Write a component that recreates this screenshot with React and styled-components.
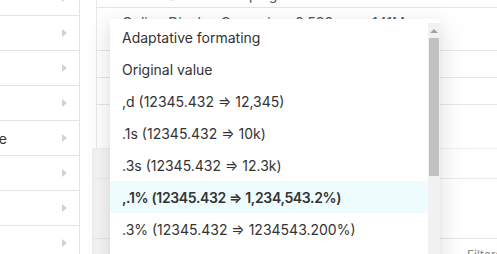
import React from 'react';
import styled, { createGlobalStyle } from 'styled-components';

const GlobalStyle = createGlobalStyle`
    html, body {
        margin: 0;
        padding: 0;
        background: #ffffff;
    }
    body {
        font-family: Inter, "Noto Sans", "DejaVu Sans", sans-serif;
        color: #333333;
    }
`;

const Page = styled.div`
    position: relative;
    width: 497px;
    height: 254px;
    overflow: hidden;
    display: flex;
    background: #ffffff;
`;

const Sidebar = styled.div`
    width: 79px;
    flex-shrink: 0;
    border-right: 1px solid #e3e3e3;
    display: flex;
    flex-direction: column;
    margin-top: -19px;
`;

const SideRow = styled.div`
    height: 34px;
    flex-shrink: 0;
    border-bottom: 1px solid #e3e3e3;
    display: flex;
    align-items: center;
    justify-content: space-between;
    padding-right: 12px;
`;

const SideLabel = styled.div`
    width: 7px;
    display: flex;
    justify-content: flex-end;
    white-space: nowrap;
    font-size: 14px;
    color: #333333;
`;

const Caret = styled.span`
    width: 0;
    height: 0;
    border-top: 4px solid transparent;
    border-bottom: 4px solid transparent;
    border-left: 5px solid #d2d2d2;
`;

const Main = styled.div`
    flex: 1;
    display: flex;
    flex-direction: column;
    margin-top: -19px;
`;

const TablePanel = styled.div`
    height: 167px;
    flex-shrink: 0;
    margin-left: 16px;
    border-left: 1px solid #e8e8e8;
    display: flex;
    flex-direction: column;
`;

const TableRow = styled.div`
    height: ${p => p.$h}px;
    flex-shrink: 0;
    border-bottom: 1px solid ${p => (p.$line ? '#e6e6e6' : 'transparent')};
    display: flex;
    align-items: ${p => (p.$top ? 'flex-start' : 'center')};
    padding-top: ${p => (p.$top ? 6 : 0)}px;
    box-sizing: border-box;
    padding-left: 25px;
    font-size: 14px;
    color: #555555;
    white-space: nowrap;
`;

const Cell = styled.span`
    width: ${p => p.$w}px;
    flex-shrink: 0;
`;

const LowerPanel = styled.div`
    flex: 1;
    margin-left: 12px;
    border-left: 1px solid #ececec;
    border-top: 1px solid #efefef;
    background: linear-gradient(to right, #f3f3f3, #fbfbfb 40px, #ffffff 80px);
    display: flex;
    flex-direction: column;
`;

const LowerHead = styled.div`
    height: 29px;
    flex-shrink: 0;
    border-bottom: 1px solid #ebebeb;
`;

const LowerBody = styled.div`
    height: 59px;
    flex-shrink: 0;
    border-bottom: 1px solid #e6e6e6;
`;

const LowerFoot = styled.div`
    padding: 8px 0 0 374px;
    font-size: 12px;
    color: #888888;
`;

const Dropdown = styled.div`
    position: absolute;
    left: 110px;
    top: 19px;
    width: 330px;
    height: 250px;
    box-sizing: border-box;
    background: #ffffff;
    border-radius: 2px;
    box-shadow: 0 3px 6px -4px rgba(0, 0, 0, 0.12), 0 6px 16px 0 rgba(0, 0, 0, 0.08), 0 9px 28px 8px rgba(0, 0, 0, 0.05);
    display: flex;
`;

const OptionList = styled.div`
    flex: 1;
    display: flex;
    flex-direction: column;
    padding-top: 2px;
`;

const Option = styled.div`
    height: 32px;
    flex-shrink: 0;
    display: flex;
    align-items: center;
    padding: 0 12px;
    font-size: 14px;
    white-space: nowrap;
    color: #333333;
    font-weight: ${p => (p.$selected ? 600 : 400)};
    letter-spacing: ${p => (p.$selected ? '-0.35px' : 'normal')};
    background: ${p => (p.$selected ? '#effcfe' : 'transparent')};
`;

const Scrollbar = styled.div`
    width: 12px;
    margin-top: 4px;
    background: #f1f1f1;
    display: flex;
    flex-direction: column;
    align-items: center;
`;

const ScrollArrow = styled.div`
    height: 15px;
    flex-shrink: 0;
    display: flex;
    align-items: center;
    justify-content: center;

    &::before {
        content: '';
        border-left: 4px solid transparent;
        border-right: 4px solid transparent;
        border-bottom: 4px solid #a3a3a3;
    }
`;

const ScrollThumb = styled.div`
    width: 10px;
    height: 138px;
    background: #c1c1c1;
`;

const options = [
    'Adaptative formating',
    'Original value',
    ',d (12345.432 ⇒ 12,345)',
    '.1s (12345.432 ⇒ 10k)',
    '.3s (12345.432 ⇒ 12.3k)',
    ',.1% (12345.432 ⇒ 1,234,543.2%)',
    '.3% (12345.432 ⇒ 1234543.200%)',
    ',.3f (12345.432 ⇒ 12,345.432)',
];

function App() {
    return (
        <>
            <GlobalStyle />
            <Page>
                <Sidebar>
                    {[0, 1, 2, 3, 4, 5, 6, 7].map(i => (
                        <SideRow key={i}>
                            <SideLabel>{i === 4 ? 'Rolling type' : ''}</SideLabel>
                            <Caret />
                        </SideRow>
                    ))}
                </Sidebar>
                <Main>
                    <TablePanel>
                        <TableRow $h={27} $line>
                            <Cell $w={173}>Online Search Campaign</Cell>
                            <Cell $w={77}>0.412</Cell>
                            <Cell $w={60}>98M</Cell>
                        </TableRow>
                        <TableRow $h={43} $line $top>
                            <Cell $w={173}>Online Display Campaign</Cell>
                            <Cell $w={77}>0.538</Cell>
                            <Cell $w={60}>141M</Cell>
                        </TableRow>
                        <TableRow $h={27} $line />
                        <TableRow $h={27} $line />
                    </TablePanel>
                    <LowerPanel>
                        <LowerHead />
                        <LowerBody />
                        <LowerFoot>Filters</LowerFoot>
                    </LowerPanel>
                </Main>
                <Dropdown>
                    <OptionList>
                        {options.map((o, i) => (
                            <Option key={o} $selected={i === 5}>{o}</Option>
                        ))}
                    </OptionList>
                    <Scrollbar>
                        <ScrollArrow />
                        <ScrollThumb />
                    </Scrollbar>
                </Dropdown>
            </Page>
        </>
    );
}

export default App;
